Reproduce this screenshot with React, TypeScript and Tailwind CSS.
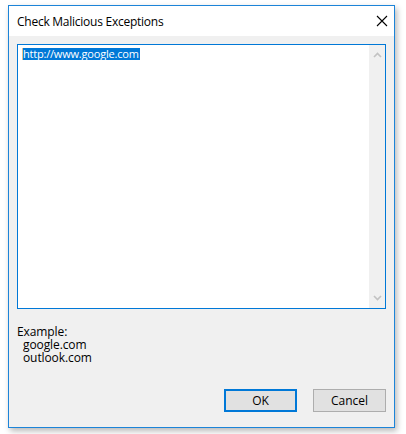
import React from "react";

const font = { fontFamily: '"Segoe UI", "Open Sans", "Noto Sans", sans-serif' };

export default function App() {
  return (
    <div className="w-[406px] h-[434px] bg-white overflow-hidden" style={font}>
      <div className="ml-[8px] mt-[5px] w-[387px] h-[423px] border border-[#1c84d8] bg-[#f0f0f0] flex flex-col shadow-[2px_3px_6px_rgba(0,0,0,0.28)]">
        <div className="h-[30px] bg-white flex items-center justify-between pl-[8px] pr-[6px] shrink-0">
          <span className="text-[12px] text-black tracking-[-0.25px] leading-none mt-[1px]">Check Malicious Exceptions</span>
          <svg width="12" height="12" viewBox="0 0 12 12">
            <path d="M1 1 L11 11 M11 1 L1 11" stroke="#000" strokeWidth="1.1" />
          </svg>
        </div>
        <div className="flex flex-col flex-1 px-[8px] pt-[8px]">
          <div className="h-[265px] border border-[#0078d7] bg-white flex">
            <div className="flex-1 pl-[4px] pt-[3px]">
              <div className="flex items-start">
                <span className="w-[1px] h-[12px] bg-[#e8c090]" />
                <span className="text-[11px] leading-[12px] h-[12px] bg-[#0078d7] text-white pr-[1px] tracking-[-0.2px]">http://www.google.com</span>
              </div>
            </div>
            <div className="w-[16px] bg-[#f0f0f0] flex flex-col justify-between items-center py-[7px]">
              <svg width="9" height="6" viewBox="0 0 9 6">
                <path d="M1 5 L4.5 1.5 L8 5" stroke="#c2c2c2" strokeWidth="1.6" fill="none" />
              </svg>
              <svg width="9" height="6" viewBox="0 0 9 6">
                <path d="M1 1 L4.5 4.5 L8 1" stroke="#c2c2c2" strokeWidth="1.6" fill="none" />
              </svg>
            </div>
          </div>
          <div className="mt-[16px] text-[12px] leading-[13px] text-black tracking-[-0.1px]">
            <div>Example:</div>
            <div className="pl-[6px]">google.com</div>
            <div className="pl-[6px]">outlook.com</div>
          </div>
          <div className="flex justify-end gap-[16px] mt-[25px]">
            <button className="w-[73px] h-[23px] border-2 border-[#0078d7] bg-[#e1e1e1] text-[12px] text-black flex items-center justify-center">OK</button>
            <button className="w-[73px] h-[23px] border border-[#adadad] bg-[#e1e1e1] text-[12px] text-black flex items-center justify-center">Cancel</button>
          </div>
        </div>
      </div>
    </div>
  );
}
